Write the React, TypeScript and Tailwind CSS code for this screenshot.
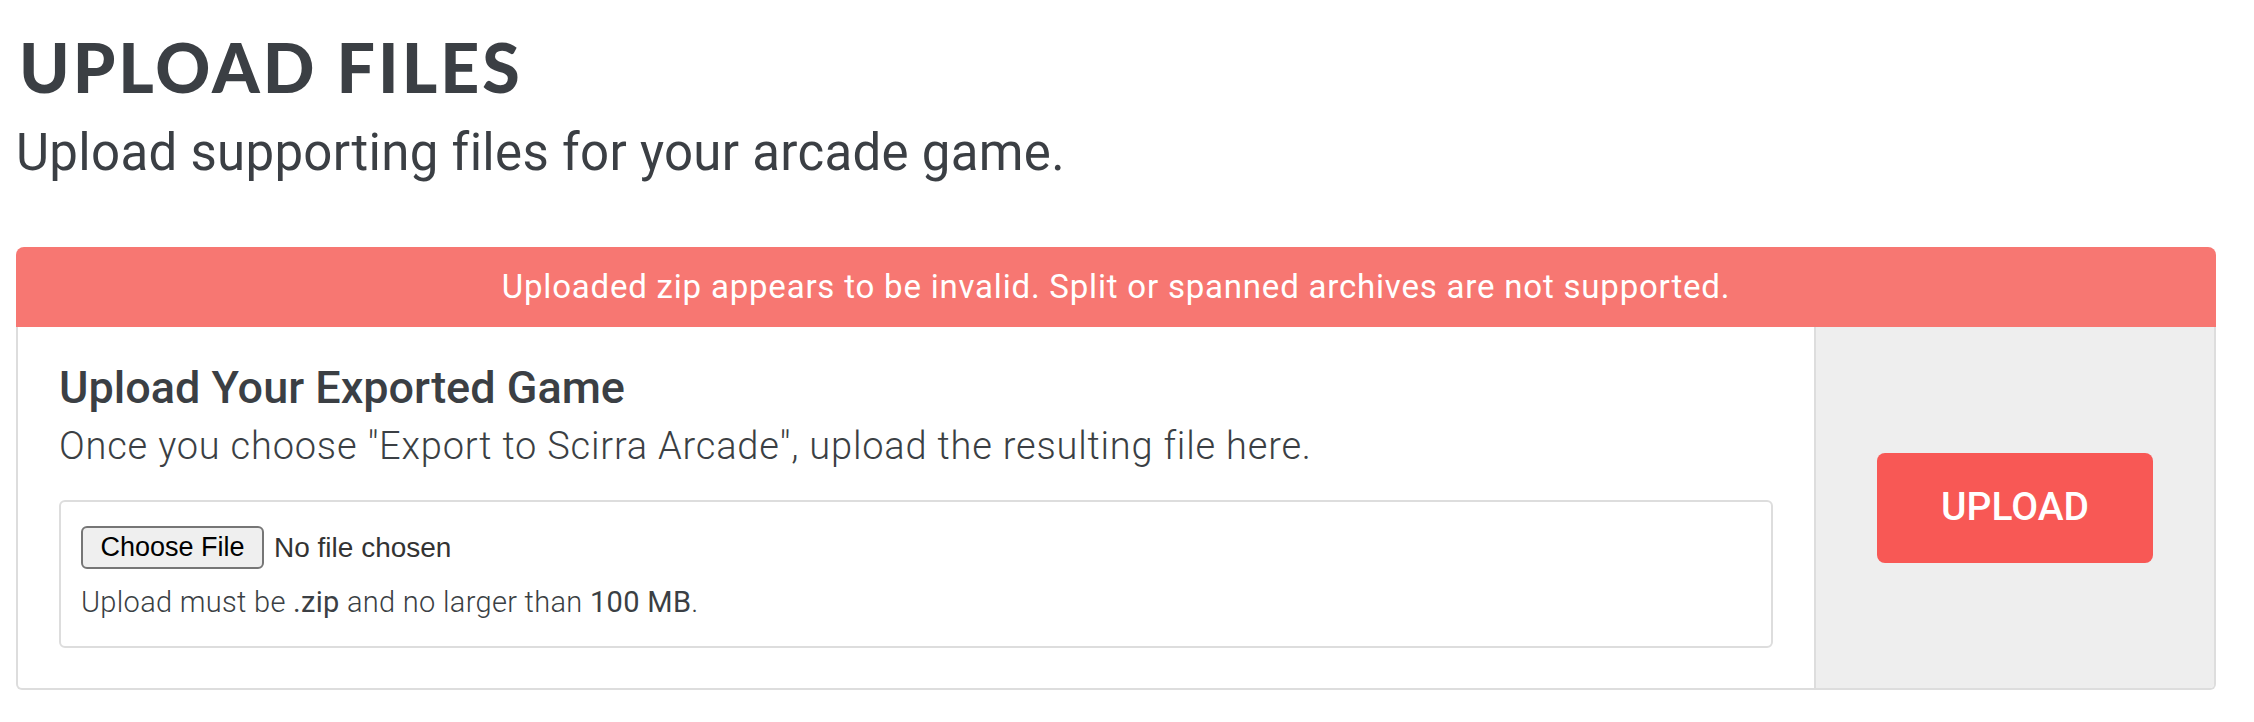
import React from "react";

export default function App() {
  return (
    <div className="bg-white w-[2254px] h-[722px] overflow-hidden font-['Roboto',sans-serif] text-[#3b3f44]">
      <div className="pl-[16px] pt-[27px]">
        <h1 className="font-['Lato',sans-serif] font-black text-[68px] leading-[80px] tracking-[3px] pl-[3px] text-[#3b3f44]">
          UPLOAD FILES
        </h1>
        <p className="mt-[16px] text-[51px] leading-[60px] font-normal tracking-[0.3px]">
          Upload supporting files for your arcade game.
        </p>

        <div className="mt-[64px] w-[2200px]">
          <div className="h-[80px] rounded-t-[8px] bg-[#f77772] text-white text-[33px] leading-[80px] tracking-[0.8px] text-center">
            Uploaded zip appears to be invalid. Split or spanned archives are not supported.
          </div>
          <div className="flex border-2 border-t-0 border-[#dddddd] rounded-b-[6px] overflow-hidden">
            <div className="flex-1 pl-[41px] pr-[41px] pt-[35px] pb-[40px]">
              <h2 className="text-[45px] leading-[52px] font-medium">Upload Your Exported Game</h2>
              <p className="mt-[8px] text-[38px] leading-[48px] font-light tracking-[0.8px]">
                Once you choose "Export to Scirra Arcade", upload the resulting file here.
              </p>
              <div className="mt-[30px] border-2 border-[#dddddd] rounded-[6px] pl-[20px] pt-[24px] pb-[24px]">
                <div className="flex items-center h-[43px]">
                  <div className="h-[43px] w-[183px] flex items-center justify-center bg-[#efefef] border-2 border-[#767676] rounded-[6px] font-['Liberation_Sans',Arial,sans-serif] text-[27px] text-black">
                    Choose File
                  </div>
                  <span className="ml-[10px] font-['Liberation_Sans',Arial,sans-serif] text-[28px] text-[#333]">
                    No file chosen
                  </span>
                </div>
                <p className="mt-[13px] text-[29px] leading-[40px] font-light tracking-[0.3px]">
                  Upload must be <span className="font-normal">.zip</span> and no larger than{" "}
                  <span className="font-normal">100 MB</span>.
                </p>
              </div>
            </div>
            <div className="w-[400px] bg-[#eeeeee] border-l-2 border-[#dddddd] flex items-center justify-center">
              <button className="w-[276px] h-[110px] rounded-[8px] bg-[#f85855] text-white text-[39px] font-medium">
                UPLOAD
              </button>
            </div>
          </div>
        </div>
      </div>
    </div>
  );
}
